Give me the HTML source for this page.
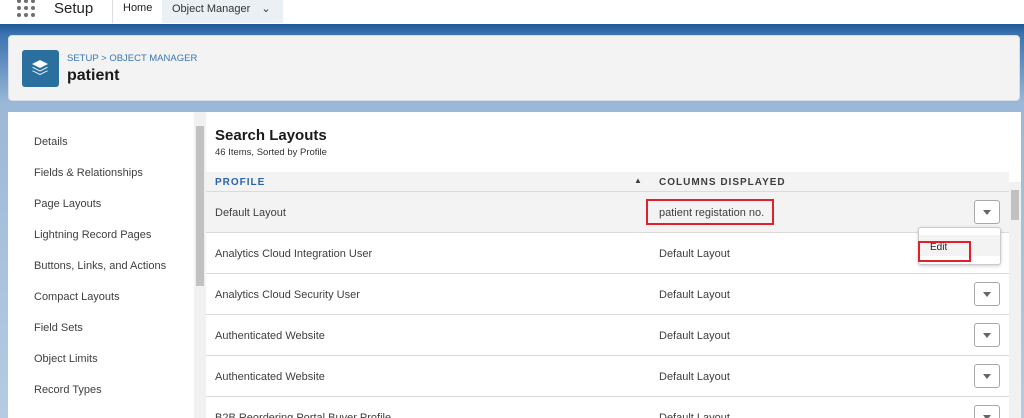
<!DOCTYPE html>
<html style="width:1024px;height:418px;overflow:hidden"><head><style>
*{box-sizing:border-box;margin:0;padding:0}
body{width:1024px;height:418px;overflow:hidden;font-family:"Liberation Sans",sans-serif;background:#fff;position:relative;color:#3e3e3c}
.top{position:absolute;left:0;top:0;width:1024px;height:24px;background:#fff}
.banner{position:absolute;left:0;top:24px;width:1024px;height:394px;background:linear-gradient(#1f5a96 0,#3a73b0 10px,#9cb8d8 80px,#b6cbe3 100%)}
.hdr{position:absolute;left:8px;top:35px;width:1012px;height:66px;background:#f3f3f3;border-radius:4px;border:1px solid #d8dde6}
.icon{position:absolute;left:13px;top:14px;width:37px;height:37px;background:#2a6f9e;border-radius:3px}
.nav{position:absolute;left:8px;top:112px;width:186px;height:306px;background:#fff}
.nav div{position:absolute;left:26px;font-size:11px;color:#3e3e3c}
.sb{position:absolute;left:194px;top:112px;width:12px;height:306px;background:#f1f1f1}
.main{position:absolute;left:206px;top:112px;width:815px;height:306px;background:#fff;overflow:hidden}
.row{position:absolute;left:0;width:803px;height:41px;border-bottom:1px solid #dddbda;font-size:11px}
.row span{position:absolute;top:15px}
.dd{position:absolute;left:768px;top:8px;width:26px;height:24px;border:1px solid #a8a8a8;border-radius:3px;background:#fff}
.dd:after{content:"";position:absolute;left:8px;top:9px;border-left:4px solid transparent;border-right:4px solid transparent;border-top:5px solid #666}
</style></head><body>
<div class="top">
<svg style="position:absolute;left:16px;top:0" width="20" height="18"><g fill="#706e6b"><circle cx="3" cy="1" r="2"/><circle cx="10" cy="1" r="2"/><circle cx="17" cy="1" r="2"/><circle cx="3" cy="8" r="2"/><circle cx="10" cy="8" r="2"/><circle cx="17" cy="8" r="2"/><circle cx="3" cy="15" r="2"/><circle cx="10" cy="15" r="2"/><circle cx="17" cy="15" r="2"/></g></svg>
<div style="position:absolute;left:54px;top:0;font-size:15px;color:#222">Setup</div>
<div style="position:absolute;left:112px;top:0;width:50px;height:23px;border-left:1px solid #ddd;font-size:11px;color:#222;padding:2px 0 0 10px">Home</div>
<div style="position:absolute;left:162px;top:0;width:121px;height:23px;background:#eaf0f4;font-size:11px;color:#333;padding:2px 0 0 10px">Object Manager <span style="margin-left:8px">&#8964;</span></div>
</div>
<div class="banner"></div>
<div class="hdr">
<div class="icon"><svg width="37" height="37"><g fill="#fff"><path d="M18 10l8 4-8 4-8-4z"/><path d="M11 17l7 3.5 7-3.5 1 .5-8 4-8-4z"/><path d="M11 20.5l7 3.5 7-3.5 1 .5-8 4-8-4z"/></g></svg></div>
<div style="position:absolute;left:58px;top:17px;font-size:9.5px;color:#3a77b0">SETUP &gt; OBJECT MANAGER</div>
<div style="position:absolute;left:58px;top:31px;font-size:16px;font-weight:bold;color:#1a1a1a">patient</div>
</div>
<div class="nav">
<div style="top:24px">Details</div><div style="top:55px">Fields &amp; Relationships</div><div style="top:86px">Page Layouts</div><div style="top:117px">Lightning Record Pages</div><div style="top:148px">Buttons, Links, and Actions</div><div style="top:179px">Compact Layouts</div><div style="top:210px">Field Sets</div><div style="top:241px">Object Limits</div><div style="top:272px">Record Types</div>
</div>
<div class="sb"><div style="position:absolute;left:2px;top:14px;width:8px;height:160px;background:#c1c1c1"></div></div>
<div class="main">
<div style="position:absolute;left:9px;top:15px;font-size:15px;font-weight:bold;color:#1a1a1a">Search Layouts</div>
<div style="position:absolute;left:9px;top:35px;font-size:9.5px;color:#333">46 Items, Sorted by Profile</div>
<div style="position:absolute;left:0;top:60px;width:803px;height:20px;background:#f3f3f3;border-bottom:1px solid #dddbda;font-size:10px;font-weight:bold;letter-spacing:1px">
<span style="position:absolute;left:9px;top:5px;color:#2a63a8">PROFILE</span>
<span style="position:absolute;left:428px;top:4px;font-size:8px">&#9650;</span>
<span style="position:absolute;left:453px;top:5px;color:#3e3e3c">COLUMNS DISPLAYED</span></div>
<div class="row" style="top:80px;background:#f3f3f3"><span style="left:9px">Default Layout</span><span style="left:440px;top:7px;width:128px;height:26px;border:2px solid #e0202a"></span><span style="left:453px">patient registation no.</span><div class="dd"></div></div>
<div class="row" style="top:121px"><span style="left:9px">Analytics Cloud Integration User</span><span style="left:453px">Default Layout</span></div>
<div class="row" style="top:162px"><span style="left:9px">Analytics Cloud Security User</span><span style="left:453px">Default Layout</span><div class="dd"></div></div>
<div class="row" style="top:203px"><span style="left:9px">Authenticated Website</span><span style="left:453px">Default Layout</span><div class="dd"></div></div>
<div class="row" style="top:244px"><span style="left:9px">Authenticated Website</span><span style="left:453px">Default Layout</span><div class="dd"></div></div>
<div class="row" style="top:285px"><span style="left:9px">B2B Reordering Portal Buyer Profile</span><span style="left:453px">Default Layout</span><div class="dd"></div></div>
<div style="position:absolute;left:712px;top:115px;width:83px;height:38px;background:#fff;border:1px solid #ccc;border-radius:3px;box-shadow:0 1px 3px rgba(0,0,0,.2)"><div style="position:absolute;left:0;top:7px;width:81px;height:21px;background:#f3f3f3"></div><div style="position:absolute;left:-1px;top:13px;width:53px;height:21px;border:2px solid #e0202a"></div><div style="position:absolute;left:11px;top:14px;font-size:10px;color:#222">Edit</div></div>
<div style="position:absolute;left:803px;top:70px;width:12px;height:236px;background:#f1f1f1"><div style="position:absolute;left:2px;top:8px;width:8px;height:30px;background:#c1c1c1"></div></div>
</div>
</body></html>
